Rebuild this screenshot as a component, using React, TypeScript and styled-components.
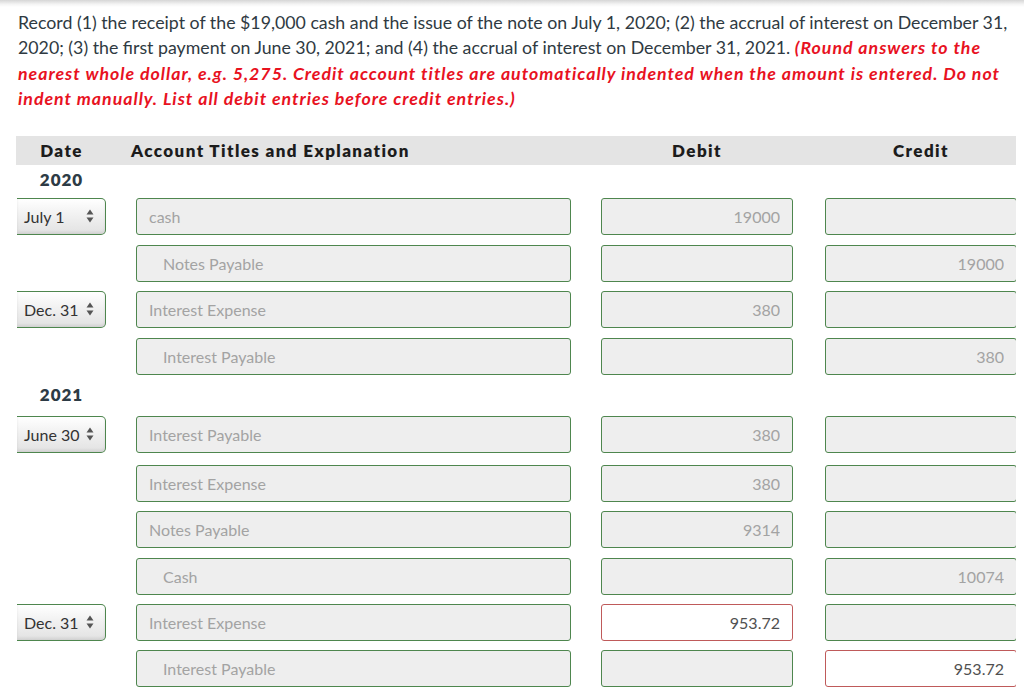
import styled, { createGlobalStyle } from "styled-components";

const GlobalStyle = createGlobalStyle`
  html, body {
    margin: 0;
    padding: 0;
    background: #ffffff;
  }
  body {
    font-family: Lato, "Open Sans", "Liberation Sans", sans-serif;
    color: #333333;
  }
`;

const Page = styled.div`
  width: 1024px;
  height: 694px;
  overflow: hidden;
`;

const TopShade = styled.div`
  height: 7px;
  background: linear-gradient(#d6d6d6, #f4f4f4 60%, #ffffff);
`;

const Instructions = styled.p`
  margin: 3px 0 0 18px;
  font-size: 17.75px;
  line-height: 25.4px;
  color: #2f3a42;
  white-space: nowrap;
`;

const Emph = styled.span`
  color: #e8121f;
  font-weight: 700;
  font-style: italic;
  letter-spacing: 0.97px;
`;

const Table = styled.div`
  margin: 24px 0 0 16px;
  width: 1000px;
  overflow: hidden;
`;

const Columns = styled.div`
  display: grid;
  grid-template-columns: 89px 435px 192px 194px;
  column-gap: 30px;
  padding-left: 1px;
`;

const HeaderRow = styled(Columns)`
  height: 29px;
  align-items: center;
  background: #e4e4e4;
  font-size: 17px;
  font-weight: 800;
  letter-spacing: 1.4px;
  color: #1c1c1c;
`;

const HeadCell = styled.div<{ $align?: "left" | "center"; $shift?: number }>`
  text-align: ${({ $align }) => $align ?? "center"};
  margin-left: ${({ $shift }) => $shift ?? 0}px;
`;

const CreditHead = styled(HeadCell)`
  padding-left: 2px;
`;

const YearLabel = styled.div<{ $before: number; $after: number }>`
  width: 89px;
  margin: ${({ $before }) => $before}px 0 ${({ $after }) => $after}px 1px;
  height: 30px;
  line-height: 30px;
  text-align: center;
  font-size: 17px;
  font-weight: 800;
  letter-spacing: 1px;
  color: #2d3b45;
`;

const EntryRow = styled(Columns)<{ $gap: number }>`
  height: 37px;
  margin-top: ${({ $gap }) => $gap}px;
`;

const DateSelect = styled.div`
  position: relative;
  box-sizing: border-box;
  height: 37px;
  display: flex;
  align-items: center;
  padding-left: 7px;
  font-size: 16px;
  color: #333333;
  border: 1px solid #4e864e;
  border-left: none;
  border-radius: 0 5px 5px 0;
  background: linear-gradient(#ffffff, #f1f1f1 45%, #e2e2e2);
  box-shadow: inset 0 -2px 3px rgba(0, 0, 0, 0.08);
`;

const Arrows = styled.svg`
  position: absolute;
  right: 11px;
  top: 50%;
  margin-top: -7px;
`;

const Field = styled.input<{ $indent?: boolean; $numeric?: boolean; $error?: boolean }>`
  box-sizing: border-box;
  width: 100%;
  height: 37px;
  margin: 0;
  padding: 0 12px 0 ${({ $indent }) => ($indent ? 26 : 12)}px;
  font-family: inherit;
  font-size: 16px;
  text-align: ${({ $numeric }) => ($numeric ? "right" : "left")};
  color: ${({ $error }) => ($error ? "#505050" : "#a3a3a3")};
  background: ${({ $error }) => ($error ? "#ffffff" : "#eeeeee")};
  border: 1px solid ${({ $error }) => ($error ? "#bf5a5a" : "#4e864e")};
  border-radius: 3px;
  outline: none;
`;

const CreditCell = styled.div`
  padding-left: 2px;
`;

type Entry = {
  date?: string;
  account: string;
  credit?: boolean;
  debit?: string;
  creditAmt?: string;
  error?: "debit" | "credit";
  gap: number;
};

type Block = { year: string; before: number; after: number; entries: Entry[] };

const blocks: Block[] = [
  {
    year: "2020",
    before: 0,
    after: 3,
    entries: [
      { date: "July 1", account: "cash", debit: "19000", gap: 0 },
      { account: "Notes Payable", credit: true, creditAmt: "19000", gap: 10 },
      { date: "Dec. 31", account: "Interest Expense", debit: "380", gap: 9 },
      { account: "Interest Payable", credit: true, creditAmt: "380", gap: 10 },
    ],
  },
  {
    year: "2021",
    before: 5,
    after: 6,
    entries: [
      { date: "June 30", account: "Interest Payable", debit: "380", gap: 0 },
      { account: "Interest Expense", debit: "380", gap: 12 },
      { account: "Notes Payable", debit: "9314", gap: 9 },
      { account: "Cash", credit: true, creditAmt: "10074", gap: 10 },
      { date: "Dec. 31", account: "Interest Expense", debit: "953.72", error: "debit", gap: 9 },
      { account: "Interest Payable", credit: true, creditAmt: "953.72", error: "credit", gap: 9 },
    ],
  },
];

const SelectArrows = () => (
  <Arrows width="8" height="14" viewBox="0 0 8 14">
    <path d="M4 0.5 L7.5 5.5 L0.5 5.5 Z" fill="#555" />
    <path d="M4 13.5 L7.5 8.5 L0.5 8.5 Z" fill="#555" />
  </Arrows>
);

const App = () => (
  <Page>
    <GlobalStyle />
    <TopShade />
    <Instructions>
      Record (1) the receipt of the $19,000 cash and the issue of the note on July 1, 2020; (2) the accrual of interest on December 31,
      <br />
      2020; (3) the first payment on June 30, 2021; and (4) the accrual of interest on December 31, 2021.{" "}
      <Emph>
        (Round answers to the
        <br />
        nearest whole dollar, e.g. 5,275. Credit account titles are automatically indented when the amount is entered. Do not
        <br />
        indent manually. List all debit entries before credit entries.)
      </Emph>
    </Instructions>

    <Table>
      <HeaderRow>
        <HeadCell>Date</HeadCell>
        <HeadCell $align="left" $shift={-5}>
          Account Titles and Explanation
        </HeadCell>
        <HeadCell>Debit</HeadCell>
        <CreditHead>Credit</CreditHead>
      </HeaderRow>

      {blocks.map((block) => (
        <div key={block.year}>
          <YearLabel $before={block.before} $after={block.after}>
            {block.year}
          </YearLabel>
          {block.entries.map((e, i) => (
            <EntryRow key={i} $gap={e.gap}>
              {e.date ? (
                <DateSelect>
                  {e.date}
                  <SelectArrows />
                </DateSelect>
              ) : (
                <div />
              )}
              <Field readOnly $indent={e.credit} value={e.account} />
              <Field readOnly $numeric $error={e.error === "debit"} value={e.debit ?? ""} />
              <CreditCell>
                <Field readOnly $numeric $error={e.error === "credit"} value={e.creditAmt ?? ""} />
              </CreditCell>
            </EntryRow>
          ))}
        </div>
      ))}
    </Table>
  </Page>
);

export default App;
